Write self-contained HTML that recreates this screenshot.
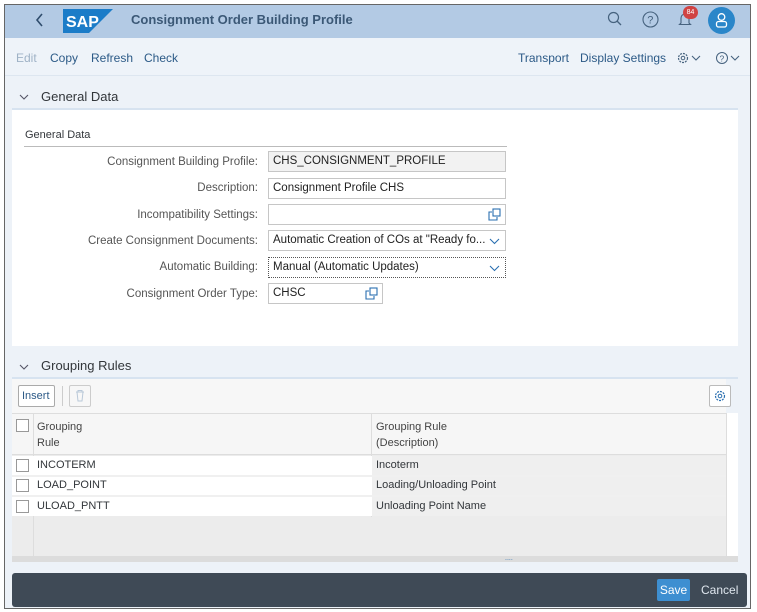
<!DOCTYPE html>
<html><head><style>
*{box-sizing:border-box;margin:0;padding:0}
body{width:757px;height:612px;background:#fff;font-family:"Liberation Sans",sans-serif;position:relative;overflow:hidden;color:#32363a}
.a{position:absolute}
.frame{left:4px;top:4px;width:747px;height:605px;border:1px solid #666;background:#edf2f8}
.hdr{left:5px;top:5px;width:745px;height:33px;background:#b3cae4}
.tb{left:5px;top:38px;width:745px;height:38px;background:#eef3f9;border-bottom:1px solid #dde6f0}
.lnk{font-size:12px;color:#2c5a87}
.lab{font-size:11.5px;color:#555;text-align:right;width:250px;left:8px}
.inp{height:21px;border:1px solid #c6c6c6;background:#fff;font-size:11.5px;padding:3px 4px;color:#222}
.cb{width:13px;height:13px;border:1px solid #999;background:#fff}
.ic{position:absolute}
</style></head><body>
<div class="a frame"></div>
<div class="a hdr"></div>
<svg class="a" style="left:35px;top:13px" width="10" height="14"><path d="M7 1L2 7l5 6" fill="none" stroke="#2f4d6d" stroke-width="1.6"/></svg>
<svg class="a" style="left:63px;top:9px" width="50" height="24"><polygon points="0,0 50,0 26,24 0,24" fill="#1b7cc8"/><text x="3" y="18" font-family="Liberation Sans" font-weight="bold" font-size="16" fill="#fff">SAP</text></svg>
<div class="a" style="left:131px;top:12px;font-size:13px;font-weight:bold;color:#3b5876">Consignment Order Building Profile</div>
<svg class="a" style="left:607px;top:11px" width="16" height="16"><circle cx="6.5" cy="6.5" r="5" fill="none" stroke="#46627e" stroke-width="1.2"/><line x1="10" y1="10" x2="14" y2="14" stroke="#46627e" stroke-width="1.3"/></svg>
<svg class="a" style="left:642px;top:11px" width="17" height="17"><circle cx="8.5" cy="8.5" r="7.5" fill="none" stroke="#46627e" stroke-width="1.1"/><text x="5.3" y="12.5" font-size="11" font-family="Liberation Sans" fill="#46627e">?</text></svg>
<svg class="a" style="left:678px;top:12px" width="14" height="16"><path d="M3 11V6a4 4 0 0 1 8 0v5l1.5 1.5h-11z" fill="none" stroke="#46627e" stroke-width="1.1"/></svg>
<div class="a" style="left:683px;top:6px;width:15px;height:13px;border-radius:7px;background:#d04343;color:#fff;font-size:7px;text-align:center;line-height:13px">84</div>
<div class="a" style="left:708px;top:7px;width:27px;height:27px;border-radius:50%;background:#2a86c9"></div>
<svg class="a" style="left:714px;top:12px" width="15" height="17"><circle cx="7.5" cy="5" r="3.3" fill="none" stroke="#fff" stroke-width="1.3"/><rect x="2.5" y="9.5" width="10" height="5.5" rx="2" fill="none" stroke="#fff" stroke-width="1.3"/></svg>
<div class="a tb"></div>
<div class="a lnk" style="left:16px;top:51px;color:#9fb2c6">Edit</div>
<div class="a lnk" style="left:50px;top:51px">Copy</div>
<div class="a lnk" style="left:91px;top:51px">Refresh</div>
<div class="a lnk" style="left:144px;top:51px">Check</div>
<div class="a lnk" style="left:518px;top:51px">Transport</div>
<div class="a lnk" style="left:580px;top:51px">Display Settings</div>
<svg class="a" style="left:677px;top:51px" width="28" height="14"><circle cx="6" cy="7" r="4.5" fill="none" stroke="#46627e" stroke-width="1.2" stroke-dasharray="2 1"/><circle cx="6" cy="7" r="1.8" fill="none" stroke="#46627e"/><path d="M15 5l4 4 4-4" fill="none" stroke="#46627e" stroke-width="1.1"/></svg>
<svg class="a" style="left:716px;top:51px" width="28" height="14"><circle cx="6" cy="7" r="5.5" fill="none" stroke="#46627e" stroke-width="1"/><text x="3.5" y="10.5" font-size="8.5" font-family="Liberation Sans" fill="#46627e">?</text><path d="M15 5l4 4 4-4" fill="none" stroke="#46627e" stroke-width="1.1"/></svg>
<svg class="a" style="left:19px;top:93px" width="10" height="8"><path d="M1 2l4 4 4-4" fill="none" stroke="#556" stroke-width="1.1"/></svg>
<div class="a" style="left:41px;top:89px;font-size:13px;color:#32363a">General Data</div>
<div class="a" style="left:12px;top:108px;width:726px;height:2px;background:#d7e3f0"></div>
<div class="a" style="left:12px;top:110px;width:726px;height:236px;background:#fff"></div>
<div class="a" style="left:25px;top:129px;font-size:11px">General Data</div>
<div class="a" style="left:24px;top:146px;width:483px;height:1px;background:#bbb"></div>
<div class="a lab" style="top:156px">Consignment Building Profile:</div>
<div class="a inp" style="left:268px;top:151px;width:238px;background:#f2f2f2">CHS_CONSIGNMENT_PROFILE</div>
<div class="a lab" style="top:182px">Description:</div>
<div class="a inp" style="left:268px;top:178px;width:238px">Consignment Profile CHS</div>
<div class="a lab" style="top:209px">Incompatibility Settings:</div>
<div class="a inp" style="left:268px;top:204px;width:238px"><svg class="ic" style="right:4px;top:3px" width="13" height="13"><path d="M4 4H1v8h8V9" fill="none" stroke="#2a6fb0" stroke-width="1.1"/><rect x="5" y="1" width="7" height="7" fill="none" stroke="#2a6fb0" stroke-width="1.1"/></svg></div>
<div class="a lab" style="top:235px">Create Consignment Documents:</div>
<div class="a inp" style="left:268px;top:230px;width:238px">Automatic Creation of COs at "Ready fo...<svg class="ic" style="right:5px;top:6px" width="11" height="8"><path d="M1 2l4.5 4.5 4.5-4.5" fill="none" stroke="#2a6fb0" stroke-width="1.1"/></svg></div>
<div class="a lab" style="top:261px">Automatic Building:</div>
<div class="a inp" style="left:268px;top:257px;width:238px;border:1px dotted #555">Manual (Automatic Updates)<svg class="ic" style="right:5px;top:6px" width="11" height="8"><path d="M1 2l4.5 4.5 4.5-4.5" fill="none" stroke="#2a6fb0" stroke-width="1.1"/></svg></div>
<div class="a lab" style="top:288px">Consignment Order Type:</div>
<div class="a inp" style="left:268px;top:283px;width:115px">CHSC<svg class="ic" style="right:4px;top:3px" width="13" height="13"><path d="M4 4H1v8h8V9" fill="none" stroke="#2a6fb0" stroke-width="1.1"/><rect x="5" y="1" width="7" height="7" fill="none" stroke="#2a6fb0" stroke-width="1.1"/></svg></div>
<svg class="a" style="left:19px;top:363px" width="10" height="8"><path d="M1 2l4 4 4-4" fill="none" stroke="#556" stroke-width="1.1"/></svg>
<div class="a" style="left:41px;top:358px;font-size:13px">Grouping Rules</div>
<div class="a" style="left:12px;top:377px;width:726px;height:2px;background:#d7e3f0"></div>
<div class="a" style="left:12px;top:379px;width:714px;height:34px;background:#f7f7f7"></div>
<div class="a" style="left:18px;top:385px;width:37px;height:22px;border:1px solid #aaa;border-radius:2px;background:#fff;font-size:11px;color:#2c5a87;padding:4px 3px">Insert</div>
<div class="a" style="left:62px;top:386px;width:1px;height:20px;background:#ccc"></div>
<div class="a" style="left:69px;top:385px;width:22px;height:22px;border:1px solid #ccc;border-radius:2px"></div>
<svg class="a" style="left:75px;top:389px" width="10" height="13"><path d="M1 3h8M3 3V1.5h4V3M2 3l1 9h4l1-9" fill="none" stroke="#b9c8d8" stroke-width="1"/></svg>
<div class="a" style="left:709px;top:385px;width:22px;height:22px;border:1px solid #bbb;border-radius:2px;background:#fff"></div>
<svg class="a" style="left:714px;top:390px" width="12" height="12"><circle cx="6" cy="6" r="4.5" fill="none" stroke="#2a6fb0" stroke-width="1.2" stroke-dasharray="2 1"/><circle cx="6" cy="6" r="1.8" fill="none" stroke="#2a6fb0"/></svg>
<div class="a" style="left:12px;top:413px;width:726px;height:146px;background:#ececec"></div>
<div class="a" style="left:12px;top:413px;width:714px;height:42px;background:#f6f6f6;border-top:1px solid #ddd;border-bottom:1px solid #ddd"></div>
<div class="a" style="left:33px;top:413px;width:1px;height:146px;background:#ddd"></div>
<div class="a" style="left:371px;top:413px;width:1px;height:104px;background:#ddd"></div>
<div class="a" style="left:726px;top:413px;width:12px;height:146px;background:#fff;border-left:1px solid #ddd"></div>
<div class="a cb" style="left:16px;top:419px"></div>
<div class="a" style="left:37px;top:419px;font-size:11px;line-height:16px;color:#444">Grouping<br>Rule</div>
<div class="a" style="left:376px;top:419px;font-size:11px;line-height:16px;color:#444">Grouping Rule<br>(Description)</div>
<div class="a" style="left:12px;top:456px;width:360px;height:60px;background:#fff"></div>
<div class="a" style="left:372px;top:456px;width:354px;height:60px;background:#efefef"></div>
<div class="a" style="left:12px;top:475px;width:714px;height:2px;background:#f0f0f0"></div>
<div class="a" style="left:12px;top:495px;width:714px;height:2px;background:#f0f0f0"></div>
<div class="a cb" style="left:16px;top:459px"></div><div class="a" style="left:37px;top:459px;font-size:11px">INCOTERM</div><div class="a" style="left:376px;top:459px;font-size:11px">Incoterm</div>
<div class="a cb" style="left:16px;top:479px"></div><div class="a" style="left:37px;top:479px;font-size:11px">LOAD_POINT</div><div class="a" style="left:376px;top:479px;font-size:11px">Loading/Unloading Point</div>
<div class="a cb" style="left:16px;top:500px"></div><div class="a" style="left:37px;top:500px;font-size:11px">ULOAD_PNTT</div><div class="a" style="left:376px;top:500px;font-size:11px">Unloading Point Name</div>
<div class="a" style="left:12px;top:556px;width:726px;height:6px;background:#dcdcdc"></div>
<div class="a" style="left:505px;top:555px;font-size:7px;color:#2a6fb0">....</div>
<div class="a" style="left:12px;top:573px;width:735px;height:34px;background:#3f4a56;border-radius:3px"></div>
<div class="a" style="left:657px;top:579px;width:33px;height:22px;background:#3e8fd1;color:#fff;font-size:12px;text-align:center;padding-top:4px;border-radius:2px">Save</div>
<div class="a" style="left:701px;top:583px;font-size:12px;color:#dfe6ee">Cancel</div>
</body></html>
